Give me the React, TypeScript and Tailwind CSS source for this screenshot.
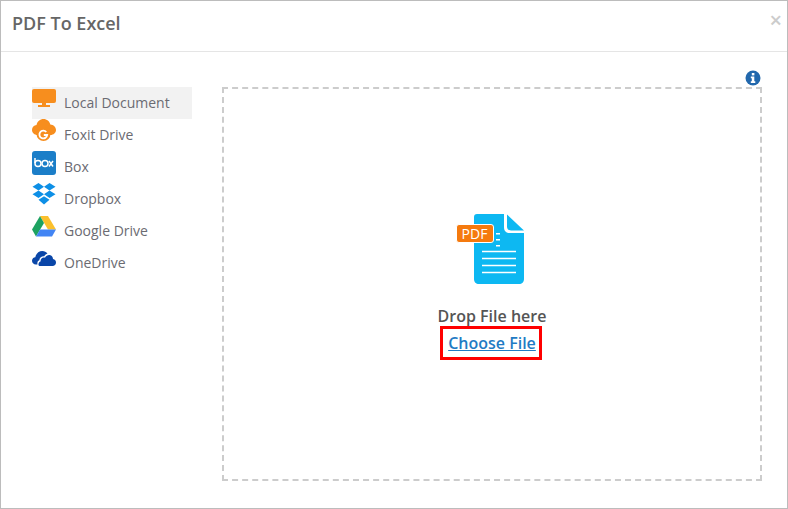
import React from "react";

const Monitor = () => (
  <svg width="24" height="18" viewBox="0 0 24 18" className="mt-[2px]">
    <rect x="0" y="0" width="24" height="14" rx="2" fill="#f78e1e" />
    <rect x="10" y="13.500" width="4" height="3" fill="#f78e1e" />
    <rect x="6" y="16" width="12" height="2" fill="#f78e1e" />
  </svg>
);
const Foxit = () => (
  <svg width="24" height="22" viewBox="0 0 24 22">
    <path d="M5.500 16C2.500 16 0 13.800 0 11C0 8.300 2 6.300 4.500 6C5.300 2.500 8 0 11.500 0C15 0 17.500 2.300 18.300 5.500C21.500 5.700 24 8 24 11C24 13.800 21.500 16 18.500 16Z" fill="#f78e1e" />
    <circle cx="11.500" cy="15" r="7" fill="#f78e1e" />
    <path d="M14.300 13A3.900 3.900 0 1 0 15.200 16L11.800 16" fill="none" stroke="#fff" strokeWidth="1.800" />
  </svg>
);
const BoxLogo = () => (
  <div className="w-6 h-6 rounded-[3px] bg-[#1b7ec8] flex items-center justify-center">
    <svg width="20" height="10" viewBox="0 0 20 10" fill="none" stroke="#fff" strokeWidth="1.500">
      <path d="M1 0V5" />
      <circle cx="4" cy="5.500" r="3" />
      <circle cx="11" cy="5.500" r="3" />
      <path d="M15 3L19 8.500M19 3L15 8.500" />
    </svg>
  </div>
);
const Dropbox = () => (
  <svg width="24" height="22" viewBox="0 0 24 22" fill="#0d8fe6">
    <path d="M6.500 0L12 3.800L6.500 7.500L0.500 3.800Z" />
    <path d="M17.500 0L23.500 3.800L17.500 7.500L12 3.800Z" />
    <path d="M6.500 7.500L12 11.300L6.500 15L0.500 11.300Z" />
    <path d="M17.500 7.500L23.500 11.300L17.500 15L12 11.300Z" />
    <path d="M6.500 16.800L12 13.300L17.500 16.800L12 21.500Z" />
  </svg>
);
const GDrive = () => (
  <svg width="24" height="21" viewBox="0 0 24 21" className="mt-px">
    <path d="M8 0H16L24 13.500H16Z" fill="#fbc02d" />
    <path d="M8 0L12 7L4 20.500L0 13.500Z" fill="#1da261" />
    <path d="M8 13.500H24L20 20.500H4Z" fill="#4285f4" />
  </svg>
);
const OneDrive = () => (
  <svg width="24" height="16" viewBox="0 1 24 16" className="mt-[3px]">
    <path fill="#0a46a8" d="M4 15.500C1.500 15.500 0 13.800 0 11.800C0 9.800 1.500 8.300 3.300 8.200C4 4.500 7 2 10.300 2C12.500 2 14.300 3 15.500 4.500C14 5 12.800 6 12.200 7.300C10 7 7.500 8.500 7.300 11.300C5.800 11.800 5 13.500 5.500 15.500Z" />
    <path fill="#0a46a8" d="M7.500 17C6 17 6 13 8.500 12.500C8.500 9.500 11 8 13 8.800C14 6.500 16 5.800 17.500 6C20 6.300 21 8.500 21 10C23 10.300 24 11.800 24 13.500C24 15.500 22.500 17 20.500 17Z" />
  </svg>
);

const InfoIcon = () => (
  <svg width="16" height="16" viewBox="0 0 16 16" className="block">
    <circle cx="8" cy="8" r="7.500" fill="#2268ad" />
    <rect x="6.800" y="3" width="2.600" height="2.400" fill="#fff" />
    <path d="M5.800 6.500H9.300V11.300H10.300V13H5.800V11.300H6.800V8.200H5.800Z" fill="#fff" />
  </svg>
);

const PdfFile = () => (
  <div className="relative w-[67px] h-[70px]">
    <svg width="67" height="70" viewBox="0 0 67 70" className="block">
      <path d="M20 0H47V13C47 17 49 19 53 19H67V65C67 68 65 70 62 70H22C19 70 17 68 17 65V3C17 1 18 0 20 0Z" fill="#0db8f2" />
      <path d="M50 0.500L67 16.500H54C51.500 16.500 50 15 50 12.500Z" fill="#0db8f2" />
      <g stroke="#fff" strokeWidth="1.500">
        <path d="M39 19.800H43M39 25.800H43M39 31.800H43" />
        <path d="M25 37.500H59M25 44.500H59M25 51.500H59M25 58.500H59" />
      </g>
    </svg>
    <div className="absolute left-0 top-[11px] w-[36px] h-[17px] rounded-[3px] bg-[#f57a0e] border border-white box-content -mt-px -ml-px flex items-center justify-center text-[14px] leading-none text-white">
      PDF
    </div>
  </div>
);

const items: [string, React.ReactNode][] = [
  ["Local Document", <Monitor />],
  ["Foxit Drive", <Foxit />],
  ["Box", <BoxLogo />],
  ["Dropbox", <Dropbox />],
  ["Google Drive", <GDrive />],
  ["OneDrive", <OneDrive />],
];

export default function App() {
  return (
    <div className="w-[788px] h-[509px] bg-white border border-[#bcbcbc] flex flex-col font-['Open_Sans',sans-serif] overflow-hidden">
      <header className="h-[51px] shrink-0 border-b border-[#e5e5e5] flex items-center justify-between pl-[11px] pr-[5px]">
        <h1 className="text-[18px] font-semibold text-[#666] -mt-[5px]">PDF To Excel</h1>
        <span className="text-[22px] leading-none font-semibold text-[#ccc] -mt-[14px]">×</span>
      </header>
      <div className="flex-1 flex pl-[31px] pt-[35px]">
        <nav className="w-[160px] shrink-0 flex flex-col">
          {items.map(([label, icon], i) => (
            <div key={label} className={`h-8 flex ${i === 0 ? "bg-[#f2f2f2]" : ""}`}>
              <div className="w-6 h-6 flex items-start justify-center">{icon}</div>
              <span className="ml-2 leading-8 text-[14px] text-[#6b6b72]">{label}</span>
            </div>
          ))}
        </nav>
        <main className="relative ml-[30px] w-[540px] h-[394px] border-2 border-dashed border-[#ccc] flex flex-col items-center pt-[125px]">
          <div className="absolute -right-px -top-[19px]">
            <InfoIcon />
          </div>
          <div className="-ml-[4px]">
            <PdfFile />
          </div>
          <p className="mt-[20px] text-[16px] leading-[24px] font-semibold text-[#555]">Drop File here</p>
          <div className="-mt-[2px] -ml-[2px] w-[102px] h-[34px] border-[3px] border-[#ff0000] flex items-center justify-center">
            <a className="ml-[2px] text-[16px] leading-[22px] font-semibold text-[#1f7bc4] underline decoration-1">Choose File</a>
          </div>
        </main>
      </div>
    </div>
  );
}
